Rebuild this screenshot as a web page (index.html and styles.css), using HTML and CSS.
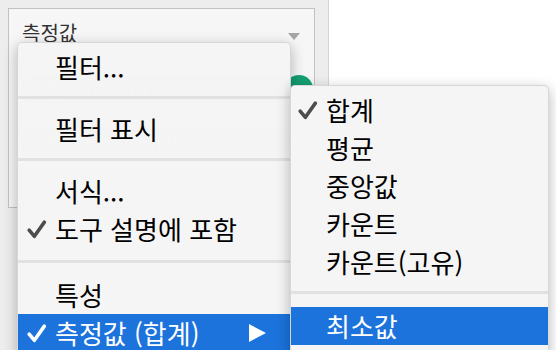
FILE: index.html
```html
<!DOCTYPE html>
<html lang="ko">
<head>
    <meta charset="UTF-8">
    <title>측정값 메뉴</title>
    <link rel="stylesheet" href="styles.css">
</head>
<body>
    <div class="screen">
        <div class="side">
            <div class="panel">
                <div class="panel-head">
                    <span class="panel-title">측정값</span>
                    <span class="caret"></span>
                </div>
                <div class="pill">합계(Profit)<span class="dot"></span></div>
                <div class="pill">합계(INCLUDE for...</div>
            </div>
        </div>
        <div class="canvas"></div>

        <!-- context menu -->
        <ul class="menu menu-main">
            <li class="item">필터...</li>
            <li class="sep"></li>
            <li class="item">필터 표시</li>
            <li class="sep"></li>
            <li class="item">서식...</li>
            <li class="item checked">
                <svg class="check" viewBox="0 0 20 20"><path d="M3 10.5 L8 16.5 L17.5 3"/></svg>
                도구 설명에 포함
            </li>
            <li class="sep sep-wide"></li>
            <li class="item">특성</li>
            <li class="item checked active">
                <svg class="check" viewBox="0 0 20 20"><path d="M3 10.5 L8 16.5 L17.5 3"/></svg>
                측정값 (합계)
                <span class="arrow"></span>
            </li>
        </ul>

        <!-- aggregation submenu -->
        <ul class="menu menu-sub">
            <li class="item checked">
                <svg class="check" viewBox="0 0 20 20"><path d="M3 10.5 L8 16.5 L17.5 3"/></svg>
                합계
            </li>
            <li class="item">평균</li>
            <li class="item">중앙값</li>
            <li class="item">카운트</li>
            <li class="item">카운트(고유)</li>
            <li class="sep"></li>
            <li class="item active">최소값</li>
            <li class="item">최대값</li>
        </ul>
    </div>
</body>
</html>
```

FILE: styles.css
```css
body {
    margin: 0;
    padding: 0;
    font-family: "Noto Sans CJK KR", "Noto Sans", sans-serif;
    background: #efefef;
    overflow: hidden;
}

.screen {
    position: relative;
    width: 556px;
    height: 350px;
    display: flex;
    overflow: hidden;
}

.side {
    width: 320px;
    padding: 8px 0 0 8px;
    background: #ededed;
    border-right: 1px solid #d4d4d4;
}

.canvas {
    flex: 1;
    background: #ffffff;
}

.panel {
    width: 307px;
    height: 200px;
    border: 1px solid #c2c2c2;
    background: #f6f6f6;
    box-sizing: border-box;
}

.panel-head {
    display: flex;
    justify-content: space-between;
    align-items: center;
    padding: 10px 14px 0 13px;
    height: 26px;
}

.panel-title {
    font-size: 20px;
    color: #333;
}

.caret {
    width: 0;
    height: 0;
    border-left: 6px solid transparent;
    border-right: 6px solid transparent;
    border-top: 7px solid #a6a6a6;
    margin-top: 8px;
}

.pill {
    position: relative;
    margin: 30px 0 0 12px;
    width: 272px;
    height: 28px;
    border-radius: 14px;
    background: #d4d4d4;
    color: #ffffff;
    font-size: 22px;
    line-height: 28px;
    padding-left: 24px;
    box-sizing: border-box;
}

.pill + .pill {
    margin-top: 24px;
}

.dot {
    position: absolute;
    right: -20px;
    top: 0;
    width: 28px;
    height: 28px;
    border-radius: 50%;
    background: #15a074;
}

/* menus */
.menu {
    position: absolute;
    list-style: none;
    margin: 0;
    padding: 5px 0 0 0;
    background: rgba(245, 245, 245, 0.97);
    border: 1px solid rgba(0, 0, 0, 0.12);
    border-radius: 5px 5px 0 0;
    box-shadow: 0 4px 14px rgba(0, 0, 0, 0.28);
    color: #000;
    font-size: 26px;
    overflow: hidden;
}

.menu-main {
    left: 17px;
    top: 42px;
    width: 272px;
    height: 320px;
}

.menu-sub {
    left: 290px;
    top: 85px;
    width: 257px;
    height: 280px;
    background: #f5f5f5;
}

.item {
    position: relative;
    height: 38px;
    line-height: 37px;
    padding-left: 37px;
    white-space: nowrap;
}

.menu-sub .item {
    padding-left: 35px;
}

.sep {
    height: 3px;
    margin: 10px 0 11px 0;
    background: #e1e1e1;
}

.sep-wide {
    margin: 12px 0 13px 0;
}

.menu-sub .sep {
    margin: 10px 0 13px 0;
}

.check {
    position: absolute;
    left: 8px;
    top: 9px;
    width: 21px;
    height: 21px;
    fill: none;
    stroke: #4d4d4d;
    stroke-width: 3.4;
    stroke-linecap: round;
    stroke-linejoin: round;
}

.menu-sub .check {
    left: 6px;
}

.active {
    background: #1b73db;
    color: #ffffff;
}

.active .check {
    stroke: #ffffff;
}

.arrow {
    position: absolute;
    left: 231px;
    top: 10px;
    width: 0;
    height: 0;
    border-top: 9px solid transparent;
    border-bottom: 9px solid transparent;
    border-left: 17px solid #ffffff;
}
```
